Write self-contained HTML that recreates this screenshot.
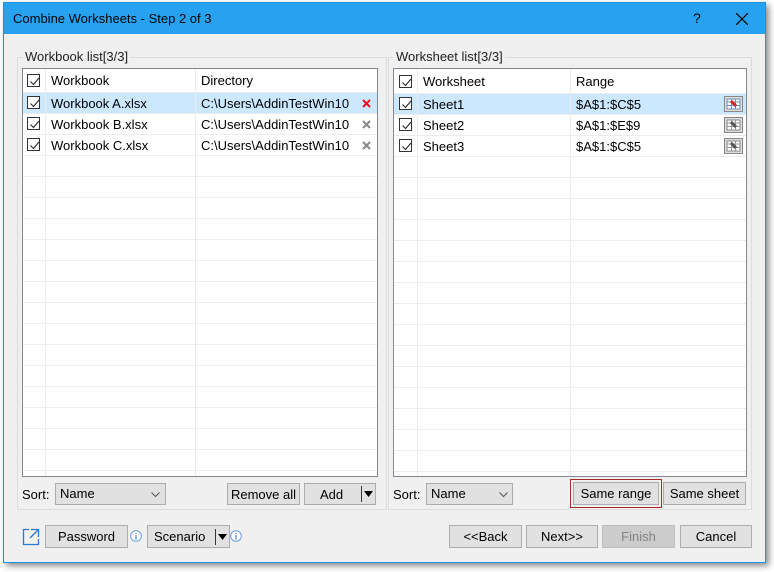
<!DOCTYPE html>
<html><head><style>
*{box-sizing:border-box;margin:0;padding:0}
body{width:774px;height:572px;background:#fff;font-family:"Liberation Sans","Microsoft YaHei",sans-serif;font-size:13px;color:#000;position:relative;overflow:hidden}
.a{position:absolute}
.win{left:3px;top:2px;width:763px;height:561px;border:1px solid #1f8fe0;background:#f0f0f0;box-shadow:3px 3px 6px rgba(0,0,0,.45)}
.title{left:0;top:0;width:761px;height:31px;background:#27a2f1;color:#000;font-size:13px}
.grp{border:1px solid #dcdcdc}
.lg{background:#f0f0f0;padding:0 2px;font-size:13px;color:#222}
.grid{background:#fff;border:1px solid #828790;overflow:hidden}
.hl{background:#cce8ff}
.cb{width:13px;height:13px;border:1px solid #333;background:#fff}
.cb svg{position:absolute;left:1px;top:1px}
.btn{background:#e1e1e1;border:1px solid #adadad;text-align:center;line-height:21px;font-size:13px}
.sel{background:#e1e1e1;border:1px solid #adadad;padding-left:4px;line-height:20px;font-size:13px}
.t{white-space:nowrap}
</style></head><body>
<div class="a win">
 <div class="a title"><span class="a t" style="left:9px;top:8px">Combine Worksheets - Step 2 of 3</span>
 <span class="a t" style="left:689px;top:7px;font-size:14px">?</span>
 <svg class="a" style="left:732px;top:10px" width="12" height="12"><path d="M0 0L12 12M12 0L0 12" stroke="#000" stroke-width="1.2"/></svg>
 </div>
</div>

<!-- left group -->
<div class="a grp" style="left:17px;top:57px;width:370px;height:453px"></div>
<div class="a lg t" style="left:23px;top:49px">Workbook list[3/3]</div>
<div class="a grid" style="left:22px;top:68px;width:356px;height:409px;
background-image:linear-gradient(#fff,#fff);">
 <div class="a" style="left:0;top:0;width:354px;height:407px;background:repeating-linear-gradient(to bottom,transparent 0,transparent 20px,#ececec 20px,#ececec 21px);background-position:0 3px"></div>
 <div class="a" style="left:0;top:0;width:354px;height:24px;background:#fff;border-bottom:1px solid #ececec"></div>
 <div class="a hl" style="left:0;top:24px;width:354px;height:20px"></div>
 <div class="a" style="left:22px;top:0;width:1px;height:407px;background:#ececec"></div>
 <div class="a" style="left:172px;top:0;width:1px;height:407px;background:#ececec"></div>
 <div class="a cb" style="left:4px;top:5px"><svg width="11" height="11"><path d="M1.5 5.5L4.5 8.5L10 2" stroke="#333" fill="none" stroke-width="1.2"/></svg></div>
 <span class="a t" style="left:28px;top:4px">Workbook</span><span class="a t" style="left:178px;top:4px">Directory</span>
 <div class="a cb" style="left:4px;top:27px"><svg width="11" height="11"><path d="M1.5 5.5L4.5 8.5L10 2" stroke="#333" fill="none" stroke-width="1.2"/></svg></div>
 <span class="a t" style="left:28px;top:27px">Workbook A.xlsx</span><span class="a t" style="left:178px;top:27px">C:\Users\AddinTestWin10</span>
 <svg class="a" style="left:339px;top:30px" width="9" height="9"><path d="M1 1L8 8M8 1L1 8" stroke="#e81123" stroke-width="2"/></svg>
 <div class="a cb" style="left:4px;top:48px"><svg width="11" height="11"><path d="M1.5 5.5L4.5 8.5L10 2" stroke="#333" fill="none" stroke-width="1.2"/></svg></div>
 <span class="a t" style="left:28px;top:48px">Workbook B.xlsx</span><span class="a t" style="left:178px;top:48px">C:\Users\AddinTestWin10</span>
 <svg class="a" style="left:339px;top:51px" width="9" height="9"><path d="M1 1L8 8M8 1L1 8" stroke="#888" stroke-width="2"/></svg>
 <div class="a cb" style="left:4px;top:69px"><svg width="11" height="11"><path d="M1.5 5.5L4.5 8.5L10 2" stroke="#333" fill="none" stroke-width="1.2"/></svg></div>
 <span class="a t" style="left:28px;top:69px">Workbook C.xlsx</span><span class="a t" style="left:178px;top:69px">C:\Users\AddinTestWin10</span>
 <svg class="a" style="left:339px;top:72px" width="9" height="9"><path d="M1 1L8 8M8 1L1 8" stroke="#888" stroke-width="2"/></svg>
</div>
<span class="a t" style="left:22px;top:487px">Sort:</span>
<div class="a sel" style="left:55px;top:483px;width:111px;height:22px">Name<svg class="a" style="left:95px;top:8px" width="9" height="6"><path d="M0.5 0.5L4.5 4.5L8.5 0.5" stroke="#555" fill="none"/></svg></div>
<div class="a btn" style="left:227px;top:483px;width:73px;height:22px">Remove all</div>
<div class="a btn" style="left:304px;top:483px;width:72px;height:22px"><span class="a" style="left:15px;top:0">Add</span><div class="a" style="left:56px;top:2px;width:1px;height:16px;background:#333"></div><svg class="a" style="left:59px;top:7px" width="9" height="6"><path d="M0 0H9L4.5 6Z" fill="#000"/></svg></div>

<!-- right group -->
<div class="a grp" style="left:388px;top:57px;width:364px;height:453px"></div>
<div class="a lg t" style="left:394px;top:49px">Worksheet list[3/3]</div>
<div class="a grid" style="left:393px;top:68px;width:354px;height:409px">
 <div class="a" style="left:0;top:0;width:352px;height:407px;background:repeating-linear-gradient(to bottom,transparent 0,transparent 20px,#ececec 20px,#ececec 21px);background-position:0 4px"></div>
 <div class="a" style="left:0;top:0;width:352px;height:25px;background:#fff;border-bottom:1px solid #ececec"></div>
 <div class="a hl" style="left:0;top:25px;width:352px;height:20px"></div>
 <div class="a" style="left:23px;top:0;width:1px;height:407px;background:#ececec"></div>
 <div class="a" style="left:176px;top:0;width:1px;height:407px;background:#ececec"></div>
 <div class="a cb" style="left:5px;top:6px"><svg width="11" height="11"><path d="M1.5 5.5L4.5 8.5L10 2" stroke="#333" fill="none" stroke-width="1.2"/></svg></div>
 <span class="a t" style="left:29px;top:5px">Worksheet</span><span class="a t" style="left:182px;top:5px">Range</span>
 <div class="a cb" style="left:5px;top:28px"><svg width="11" height="11"><path d="M1.5 5.5L4.5 8.5L10 2" stroke="#333" fill="none" stroke-width="1.2"/></svg></div>
 <span class="a t" style="left:29px;top:28px">Sheet1</span><span class="a t" style="left:182px;top:28px">$A$1:$C$5</span>
 <div class="a cb" style="left:5px;top:49px"><svg width="11" height="11"><path d="M1.5 5.5L4.5 8.5L10 2" stroke="#333" fill="none" stroke-width="1.2"/></svg></div>
 <span class="a t" style="left:29px;top:49px">Sheet2</span><span class="a t" style="left:182px;top:49px">$A$1:$E$9</span>
 <div class="a cb" style="left:5px;top:70px"><svg width="11" height="11"><path d="M1.5 5.5L4.5 8.5L10 2" stroke="#333" fill="none" stroke-width="1.2"/></svg></div>
 <span class="a t" style="left:29px;top:70px">Sheet3</span><span class="a t" style="left:182px;top:70px">$A$1:$C$5</span>
 <svg class="a" style="left:330px;top:27px" width="19" height="16"><rect x=".5" y=".5" width="18" height="15" fill="#ddd" stroke="#888"/><rect x="3" y="3" width="13" height="10" fill="#fff" stroke="#6a8fb8"/><path d="M3 6H16M3 9.5H16M7.5 3V13M11.5 3V13" stroke="#6a8fb8"/><path d="M7 5L12 10" stroke="#e02020" stroke-width="3"/></svg>
 <svg class="a" style="left:330px;top:48px" width="19" height="16"><rect x=".5" y=".5" width="18" height="15" fill="#ddd" stroke="#888"/><rect x="3" y="3" width="13" height="10" fill="#fff" stroke="#888"/><path d="M3 6H16M3 9.5H16M7.5 3V13M11.5 3V13" stroke="#999"/><path d="M7 5L12 10" stroke="#555" stroke-width="3"/></svg>
 <svg class="a" style="left:330px;top:69px" width="19" height="16"><rect x=".5" y=".5" width="18" height="15" fill="#ddd" stroke="#888"/><rect x="3" y="3" width="13" height="10" fill="#fff" stroke="#888"/><path d="M3 6H16M3 9.5H16M7.5 3V13M11.5 3V13" stroke="#999"/><path d="M7 5L12 10" stroke="#555" stroke-width="3"/></svg>
</div>
<span class="a t" style="left:393px;top:487px">Sort:</span>
<div class="a sel" style="left:426px;top:483px;width:87px;height:22px">Name<svg class="a" style="left:72px;top:8px" width="9" height="6"><path d="M0.5 0.5L4.5 4.5L8.5 0.5" stroke="#555" fill="none"/></svg></div>
<div class="a" style="left:570px;top:479px;width:92px;height:29px;border:1px solid #a52a2a"></div>
<div class="a btn" style="left:573px;top:482px;width:86px;height:23px">Same range</div>
<div class="a btn" style="left:663px;top:482px;width:83px;height:23px">Same sheet</div>

<!-- footer -->
<svg class="a" style="left:22px;top:528px" width="18" height="18"><path d="M7 1.5H1.5V16.5H16.5V11" stroke="#2a7ad0" fill="none" stroke-width="1.3"/><path d="M9 1.5H16.5V9M16.5 1.5L8 10" stroke="#2a7ad0" fill="none" stroke-width="1.3"/></svg>
<div class="a btn" style="left:45px;top:525px;width:83px;height:23px">Password</div>
<svg class="a" style="left:130px;top:530px" width="12" height="12"><circle cx="6" cy="6" r="5.3" fill="#fff" stroke="#6a9ee0"/><path d="M6 5V9.5M6 3V4" stroke="#4a7ec8" stroke-width="1.2"/></svg>
<div class="a btn" style="left:147px;top:525px;width:83px;height:23px"><span class="a" style="left:6px">Scenario</span><div class="a" style="left:67px;top:3px;width:1px;height:16px;background:#333"></div><svg class="a" style="left:70px;top:8px" width="9" height="6"><path d="M0 0H9L4.5 6Z" fill="#000"/></svg></div>
<svg class="a" style="left:230px;top:530px" width="12" height="12"><circle cx="6" cy="6" r="5.3" fill="#fff" stroke="#6a9ee0"/><path d="M6 5V9.5M6 3V4" stroke="#4a7ec8" stroke-width="1.2"/></svg>
<div class="a btn" style="left:449px;top:525px;width:73px;height:23px">&lt;&lt;Back</div>
<div class="a btn" style="left:526px;top:525px;width:72px;height:23px">Next&gt;&gt;</div>
<div class="a btn" style="left:602px;top:525px;width:73px;height:23px;background:#ccc;border-color:#bfbfbf;color:#838383">Finish</div>
<div class="a btn" style="left:680px;top:525px;width:72px;height:23px">Cancel</div>
</body></html>
